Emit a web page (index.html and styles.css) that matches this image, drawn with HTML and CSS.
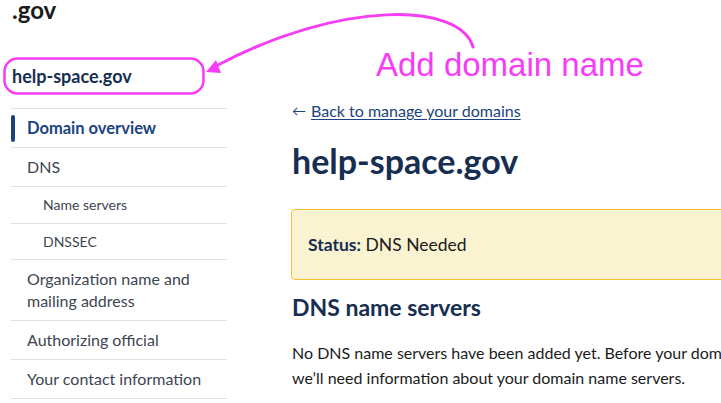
FILE: index.html
```html
<!DOCTYPE html>
<html lang="en">
<head>
<meta charset="utf-8">
<title>help-space.gov</title>
<link rel="stylesheet" href="styles.css">
</head>
<body>
<div class="page">
  <header class="site-header">
    <div class="logo">.gov</div>
  </header>
  <div class="layout">
    <aside class="sidebar">
      <div class="domain-name">help-space.gov</div>
      <ul class="sidenav">
        <li class="nav-item current"><a href="#">Domain overview</a></li>
        <li class="nav-item"><a href="#">DNS</a></li>
        <li class="nav-item sub"><a href="#">Name servers</a></li>
        <li class="nav-item sub"><a href="#">DNSSEC</a></li>
        <li class="nav-item"><a href="#">Organization name and mailing address</a></li>
        <li class="nav-item"><a href="#">Authorizing official</a></li>
        <li class="nav-item"><a href="#">Your contact information</a></li>
      </ul>
    </aside>
    <main class="main">
      <a class="back-link" href="#"><span class="arrow">&larr;</span><span class="back-text">Back to manage your domains</span></a>
      <h1 class="title">help-space.gov</h1>
      <div class="alert">
        <p><strong>Status:</strong> DNS Needed</p>
      </div>
      <h2 class="section-title">DNS name servers</h2>
      <p class="body-text">No DNS name servers have been added yet. Before your domain can be used we’ll need information about your domain name servers.</p>
    </main>
  </div>

  <svg class="annotation" width="721" height="403" viewBox="0 0 721 403" aria-hidden="true">
    <rect x="4.5" y="58.5" width="199" height="35" rx="13" ry="13" fill="none" stroke="#f53df5" stroke-width="2.5"/>
    <path d="M 473 47 C 460 2, 340 0, 216 66" fill="none" stroke="#f53df5" stroke-width="3" stroke-linecap="round"/>
    <polygon points="206,72 216,60 221,73" fill="#f53df5"/>
  </svg>
  <div class="annotation-label">Add domain name</div>
</div>
</body>
</html>
```

FILE: styles.css
```css
* {
  box-sizing: border-box;
}

html, body {
  margin: 0;
  padding: 0;
  background: #ffffff;
}

body {
  width: 721px;
  height: 403px;
  overflow: hidden;
  font-family: Lato, "Noto Sans", sans-serif;
  color: #1b1b1b;
}

.page {
  position: relative;
  width: 721px;
  height: 403px;
  overflow: hidden;
}

.site-header {
  padding: 0 0 0 12px;
  height: 56px;
}

.logo {
  font-size: 24px;
  font-weight: 700;
  line-height: 18px;
  padding-top: 1px;
  color: #1b1b1b;
}

.layout {
  display: flex;
  gap: 65px;
  padding-left: 11px;
}

.sidebar {
  flex: 0 0 216px;
}

.domain-name {
  font-size: 18px;
  font-weight: 700;
  color: #162e51;
  line-height: 24px;
  padding: 8px 0 20px 1px;
}

.sidenav {
  list-style: none;
  margin: 0;
  padding: 0;
  border-bottom: 1px solid #dfe1e2;
}

.nav-item {
  border-top: 1px solid #dfe1e2;
  position: relative;
}

.nav-item a {
  display: block;
  padding: 8px 16px;
  font-size: 16px;
  line-height: 22px;
  color: #3d4551;
  text-decoration: none;
}

.nav-item.sub a {
  padding-left: 32px;
  font-size: 14px;
  line-height: 19.5px;
}

.nav-item.current a {
  color: #1a4480;
  font-weight: 700;
  font-size: 16.5px;
}

.nav-item.current::before {
  content: "";
  position: absolute;
  left: 0;
  top: 6px;
  bottom: 5px;
  width: 4px;
  border-radius: 4px;
  background: #1a4480;
}

.main {
  flex: 0 0 560px;
  padding-top: 44px;
}

.back-link {
  display: flex;
  align-items: center;
  gap: 5px;
  font-size: 16px;
  line-height: 22px;
  color: #1a4480;
  text-decoration: none;
}

.back-link .arrow {
  font-size: 14px;
}

.back-text {
  text-decoration: underline;
  text-underline-offset: 2px;
}

.title {
  margin: 17px 0 0;
  font-size: 34px;
  line-height: 44px;
  font-weight: 700;
  color: #162e51;
}

.alert {
  margin-top: 26px;
  margin-left: -1px;
  background: #faf3d1;
  border: 1px solid #ffbe2e;
  border-radius: 4px;
  padding: 22px 16px;
}

.alert p {
  margin: 0;
  font-size: 17.5px;
  line-height: 25px;
  color: #1b1b1b;
}

.alert strong {
  color: #162e51;
}

.section-title {
  margin: 12px 0 0;
  font-size: 23px;
  line-height: 30px;
  font-weight: 700;
  color: #162e51;
}

.body-text {
  margin: 18px 0 0;
  font-size: 16px;
  line-height: 25px;
  color: #1b1b1b;
}

.annotation {
  position: absolute;
  left: 0;
  top: 0;
  pointer-events: none;
}

.annotation-label {
  position: absolute;
  left: 376px;
  top: 46px;
  font-family: "Liberation Sans", Arial, sans-serif;
  font-size: 33px;
  line-height: 38px;
  color: #f53df5;
  white-space: nowrap;
}
```
